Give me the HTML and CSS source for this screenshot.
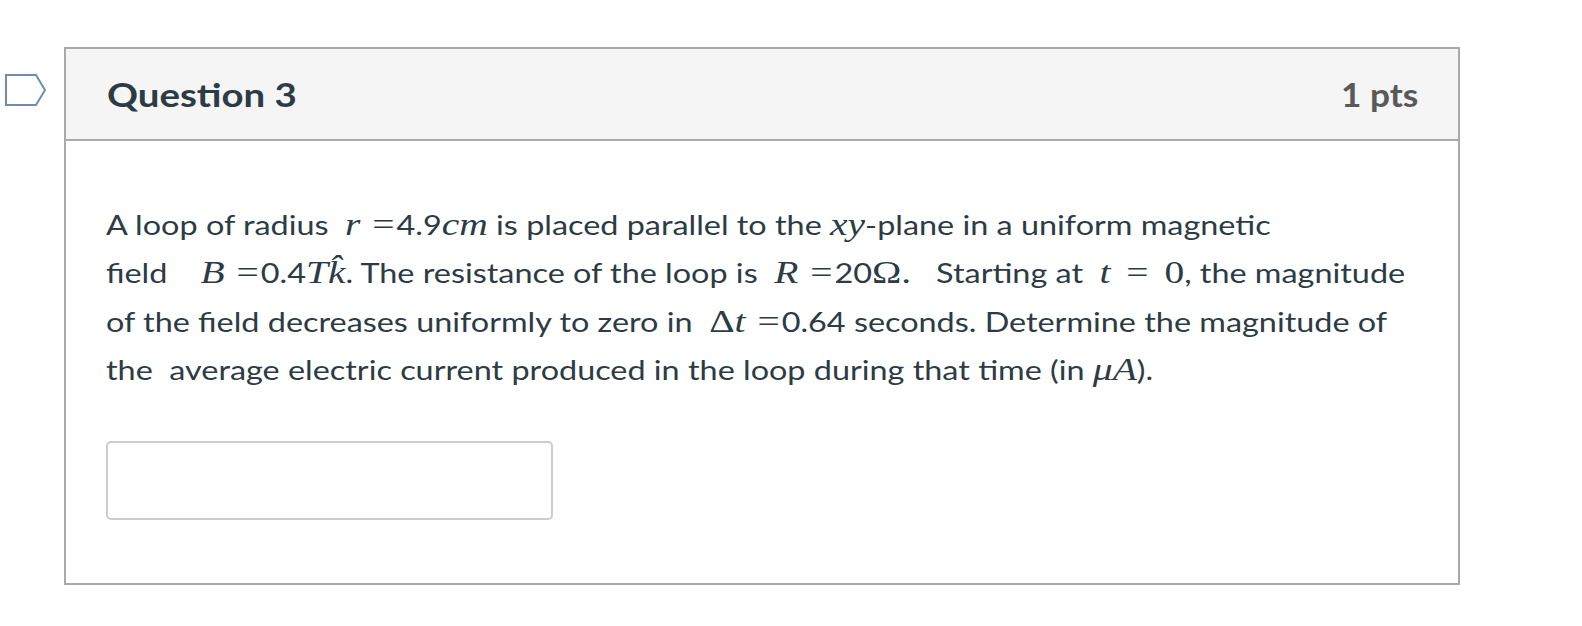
FILE: index.html
```html
<!DOCTYPE html>
<html lang="en">
<head>
<meta charset="utf-8">
<title>Question 3</title>
<link rel="stylesheet" href="styles.css">
</head>
<body>
<div class="page">
  <div class="gutter">
    <svg class="flag" width="42" height="32" viewBox="0 0 42 32" aria-hidden="true">
      <polygon points="1,1 31,1 40,16 31,31 1,31" fill="none" stroke="#6f8dab" stroke-width="2" stroke-linejoin="miter"/>
    </svg>
  </div>
  <div class="card">
    <div class="card-header">
      <h2 class="q-title">Question 3</h2>
      <div class="q-points">1 pts</div>
    </div>
    <div class="card-body">
      <p class="q-text">
        <span class="line">A loop of radius &nbsp;<span class="m"><i>r</i> <span class="rel">=</span></span>4.9<span class="m"><i>cm</i></span> is placed parallel to the <span class="m"><i>xy</i></span>-plane in a uniform magnetic</span>
        <span class="line">field &nbsp; &nbsp;<span class="m"><i>B</i> <span class="rel">=</span></span>0.4<span class="m"><i>T</i><i>k&#x0302;</i></span>. The resistance of the loop is &nbsp;<span class="m"><i>R</i> <span class="rel">=</span></span>20<span class="m">Ω.</span>&nbsp;&nbsp; Starting at &nbsp;<span class="m"><i>t</i> <span class="rel wide">=</span> 0</span>, the magnitude</span>
        <span class="line">of the field decreases uniformly to zero in &nbsp;<span class="m">Δ<i>t</i> <span class="rel">=</span></span>0.64 seconds. Determine the magnitude of</span>
        <span class="line">the &nbsp;average electric current produced in the loop during that time (in <span class="m"><i>μA</i></span>).</span>
      </p>
      <div class="answer"><input class="answer-input" type="text" aria-label="Answer"></div>
    </div>
  </div>
</div>
</body>
</html>
```
FILE: styles.css
```css
html, body {
  margin: 0;
  padding: 0;
  background: #ffffff;
}
body {
  font-family: Lato, "Open Sans", "Liberation Sans", sans-serif;
  color: #2d3b45;
}
.page {
  display: flex;
  align-items: flex-start;
  padding-top: 47px;
}
.gutter {
  width: 64px;
  flex: 0 0 64px;
}
.flag {
  display: block;
  margin: 27px 0 0 5px;
}
.card {
  box-sizing: border-box;
  width: 1396px;
  border: 2px solid #a9a9a9;
}
.card-header {
  box-sizing: border-box;
  height: 92px;
  background: #f5f5f5;
  border-bottom: 2px solid #a9a9a9;
  display: flex;
  align-items: center;
  justify-content: space-between;
  padding: 0 40px 0 41px;
}
.q-title {
  margin: 0;
  font-size: 32px;
  font-weight: 700;
  color: #2d3b45;
  transform: scaleX(1.2);
  transform-origin: left center;
}
.q-points {
  font-size: 32px;
  font-weight: 700;
  color: #595959;
  transform: scaleX(1.1);
  transform-origin: right center;
}
.card-body {
  padding: 60px 40px 63px 40px;
}
.q-text {
  margin: 0;
  font-size: 26px;
  line-height: 48.3px;
}
.line {
  display: block;
  width: max-content;
  white-space: nowrap;
  transform: scaleX(1.245);
  transform-origin: left center;
}
.m {
  font-family: "Liberation Serif", "DejaVu Serif", serif;
  font-size: 1.22em;
  line-height: 1;
}
.m i {
  font-style: italic;
}
.rel {
  display: inline-block;
  margin: 0 0.05em;
}
.rel.wide {
  margin: 0 0.15em;
}
.answer {
  margin-top: 47px;
}
.answer-input {
  display: block;
  box-sizing: border-box;
  width: 447px;
  height: 79px;
  border: 2px solid #cccccc;
  border-radius: 5px;
  background: #ffffff;
  margin: 0;
  padding: 0 12px;
  font: inherit;
}
```
